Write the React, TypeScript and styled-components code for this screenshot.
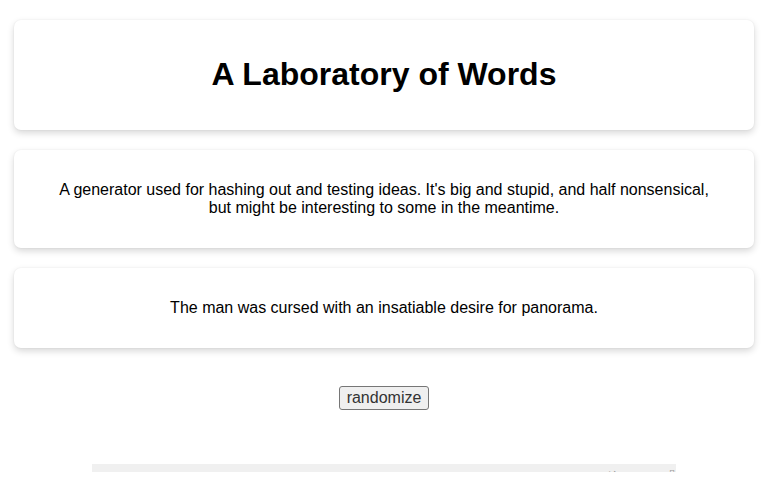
import * as React from "react";
import styled, { createGlobalStyle } from "styled-components";

const GlobalStyle = createGlobalStyle`
  html, body {
    margin: 0;
    padding: 0;
    background: #ffffff;
  }
  body {
    font-family: "Liberation Sans", Arial, sans-serif;
    color: #000000;
  }
`;

const Page = styled.main`
  display: flex;
  flex-direction: column;
  align-items: stretch;
  padding: 20px 14px 0;
`;

const Card = styled.section`
  background: #ffffff;
  border-radius: 7px;
  box-shadow: 0 3px 7px rgba(0, 0, 0, 0.16), 0 0 2px rgba(0, 0, 0, 0.07);
  padding: 15px 40px;
  margin-bottom: 20px;
  text-align: center;
`;

const Title = styled.h1`
  font-size: 32px;
  font-weight: bold;
  margin: 21.44px 0;
  line-height: normal;
`;

const Text = styled.p`
  font-size: 16px;
  margin: 16px 0;
  line-height: normal;
`;

const Actions = styled.div`
  display: flex;
  justify-content: center;
  margin-top: 18px;
`;

const Button = styled.button`
  font-family: "Liberation Sans", Arial, sans-serif;
  font-size: 16px;
  line-height: 18px;
  height: 24px;
  padding: 2px 7px;
  color: #333333;
  background: #efefef;
  border: 1px solid #767676;
  border-radius: 3px;
  cursor: pointer;
`;

const Footer = styled.footer`
  position: relative;
  width: 584px;
  margin: 54px auto 0;
`;

const FooterBar = styled.div`
  height: 8px;
  background: #f0f0f0;
`;

const FooterGlyph = styled.span<{ $left: number }>`
  position: absolute;
  top: 4px;
  left: ${(p) => p.$left}px;
  font-size: 11px;
  line-height: 11px;
  color: #999999;
`;

export default function App() {
  return (
    <>
      <GlobalStyle />
      <Page>
        <Card>
          <Title>A Laboratory of Words</Title>
        </Card>
        <Card>
          <Text>
            A generator used for hashing out and testing ideas. It's big and
            stupid, and half nonsensical, but might be interesting to some in
            the meantime.
          </Text>
        </Card>
        <Card>
          <Text>The man was cursed with an insatiable desire for panorama.</Text>
        </Card>
        <Actions>
          <Button type="button">randomize</Button>
        </Actions>
        <Footer>
          <FooterBar />
          <FooterGlyph $left={515}>↩</FooterGlyph>
          <FooterGlyph $left={577}>▯</FooterGlyph>
        </Footer>
      </Page>
    </>
  );
}
